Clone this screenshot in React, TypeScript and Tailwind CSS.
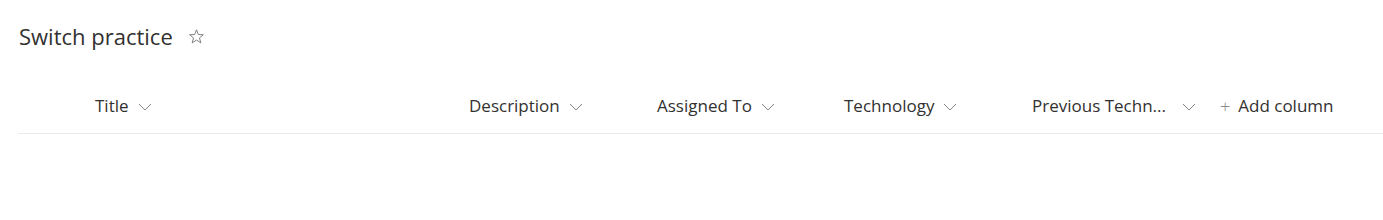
import React from 'react';

const columns = [
  { label: 'Title', width: 'w-[374px]' },
  { label: 'Description', width: 'w-[188px]' },
  { label: 'Assigned To', width: 'w-[187px]' },
  { label: 'Technology', width: 'w-[188px]' },
];

function Chevron() {
  return (
    <svg width="14" height="8" viewBox="0 0 14 8" className="shrink-0 mt-[1px]" fill="none">
      <path d="M1 1 L7 7 L13 1" stroke="#8a8886" strokeWidth="1" />
    </svg>
  );
}

function StarOutline() {
  return (
    <svg width="17" height="17" viewBox="0 0 24 24" fill="none">
      <path
        d="M12 2.5 L14.6 9.2 L21.7 9.5 L16.2 14 L18.1 21 L12 17 L5.9 21 L7.8 14 L2.3 9.5 L9.4 9.2 Z"
        stroke="#605e5c"
        strokeWidth="1.1"
        strokeLinejoin="round"
      />
    </svg>
  );
}

export default function App() {
  return (
    <div
      className="min-h-screen bg-white pt-[21px] pl-[18px] text-[#323130]"
      style={{ fontFamily: '"Open Sans", "Noto Sans", sans-serif' }}
    >
      {/* List title */}
      <div className="flex items-center h-[30px] pl-[1px]">
        <h1 className="text-[22px] leading-[30px] font-normal">Switch practice</h1>
        <button className="ml-[15px] flex items-center">
          <StarOutline />
        </button>
      </div>

      {/* Column headers */}
      <div className="mt-[44px] flex items-center border-b border-[#edebe9] pb-[16px] text-[17px] leading-[22px]">
        <div className="w-[65px] shrink-0" />
        {columns.map((col) => (
          <div key={col.label} className={`${col.width} shrink-0 px-3 flex items-center gap-[9px]`}>
            <span>{col.label}</span>
            <Chevron />
          </div>
        ))}
        <div className="w-[188px] shrink-0 px-3 flex items-center justify-between">
          <span className="truncate">Previous Techn...</span>
          <Chevron />
        </div>
        <div className="flex items-center gap-[8px] pl-3">
          <span className="text-[18px] leading-[22px] text-[#8a8886] font-light">+</span>
          <span>Add column</span>
        </div>
      </div>
    </div>
  );
}
